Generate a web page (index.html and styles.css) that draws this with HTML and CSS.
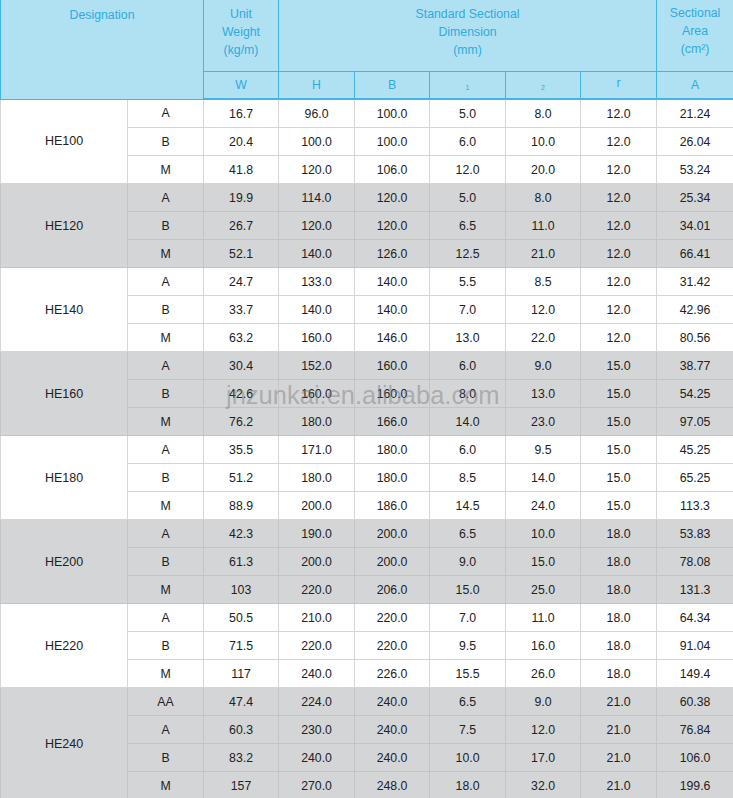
FILE: index.html
```html
<!DOCTYPE html>
<html>
<head>
<meta charset="utf-8">
<link rel="stylesheet" href="styles.css">
</head>
<body>
<div class="wrap">
<table class="spec">
<colgroup>
<col class="c-name"><col class="c-sub"><col class="c75"><col class="c76"><col class="c75"><col class="c76"><col class="c75"><col class="c76"><col class="c-last">
</colgroup>
<thead>
<tr class="h1">
<th colspan="2" rowspan="2" class="hd-desig">Designation</th>
<th>Unit<br>Weight<br>(kg/m)</th>
<th colspan="5">Standard Sectional<br>Dimension<br>(mm)</th>
<th class="hd-area">Sectional<br>Area<br>(cm²)</th>
</tr>
<tr class="h2">
<th>W</th><th>H</th><th>B</th><th><span class="tiny">1</span></th><th><span class="tiny">2</span></th><th><span class="rr">r</span></th><th>A</th>
</tr>
</thead>
<tbody class="w">
<tr><td rowspan="3" class="nm">HE100</td><td>A</td><td>16.7</td><td>96.0</td><td>100.0</td><td>5.0</td><td>8.0</td><td>12.0</td><td>21.24</td></tr>
<tr><td>B</td><td>20.4</td><td>100.0</td><td>100.0</td><td>6.0</td><td>10.0</td><td>12.0</td><td>26.04</td></tr>
<tr><td>M</td><td>41.8</td><td>120.0</td><td>106.0</td><td>12.0</td><td>20.0</td><td>12.0</td><td>53.24</td></tr>
</tbody>
<tbody class="g">
<tr><td rowspan="3" class="nm">HE120</td><td>A</td><td>19.9</td><td>114.0</td><td>120.0</td><td>5.0</td><td>8.0</td><td>12.0</td><td>25.34</td></tr>
<tr><td>B</td><td>26.7</td><td>120.0</td><td>120.0</td><td>6.5</td><td>11.0</td><td>12.0</td><td>34.01</td></tr>
<tr><td>M</td><td>52.1</td><td>140.0</td><td>126.0</td><td>12.5</td><td>21.0</td><td>12.0</td><td>66.41</td></tr>
</tbody>
<tbody class="w">
<tr><td rowspan="3" class="nm">HE140</td><td>A</td><td>24.7</td><td>133.0</td><td>140.0</td><td>5.5</td><td>8.5</td><td>12.0</td><td>31.42</td></tr>
<tr><td>B</td><td>33.7</td><td>140.0</td><td>140.0</td><td>7.0</td><td>12.0</td><td>12.0</td><td>42.96</td></tr>
<tr><td>M</td><td>63.2</td><td>160.0</td><td>146.0</td><td>13.0</td><td>22.0</td><td>12.0</td><td>80.56</td></tr>
</tbody>
<tbody class="g">
<tr><td rowspan="3" class="nm">HE160</td><td>A</td><td>30.4</td><td>152.0</td><td>160.0</td><td>6.0</td><td>9.0</td><td>15.0</td><td>38.77</td></tr>
<tr><td>B</td><td>42.6</td><td>160.0</td><td>160.0</td><td>8.0</td><td>13.0</td><td>15.0</td><td>54.25</td></tr>
<tr><td>M</td><td>76.2</td><td>180.0</td><td>166.0</td><td>14.0</td><td>23.0</td><td>15.0</td><td>97.05</td></tr>
</tbody>
<tbody class="w">
<tr><td rowspan="3" class="nm">HE180</td><td>A</td><td>35.5</td><td>171.0</td><td>180.0</td><td>6.0</td><td>9.5</td><td>15.0</td><td>45.25</td></tr>
<tr><td>B</td><td>51.2</td><td>180.0</td><td>180.0</td><td>8.5</td><td>14.0</td><td>15.0</td><td>65.25</td></tr>
<tr><td>M</td><td>88.9</td><td>200.0</td><td>186.0</td><td>14.5</td><td>24.0</td><td>15.0</td><td>113.3</td></tr>
</tbody>
<tbody class="g">
<tr><td rowspan="3" class="nm">HE200</td><td>A</td><td>42.3</td><td>190.0</td><td>200.0</td><td>6.5</td><td>10.0</td><td>18.0</td><td>53.83</td></tr>
<tr><td>B</td><td>61.3</td><td>200.0</td><td>200.0</td><td>9.0</td><td>15.0</td><td>18.0</td><td>78.08</td></tr>
<tr><td>M</td><td>103</td><td>220.0</td><td>206.0</td><td>15.0</td><td>25.0</td><td>18.0</td><td>131.3</td></tr>
</tbody>
<tbody class="w">
<tr><td rowspan="3" class="nm">HE220</td><td>A</td><td>50.5</td><td>210.0</td><td>220.0</td><td>7.0</td><td>11.0</td><td>18.0</td><td>64.34</td></tr>
<tr><td>B</td><td>71.5</td><td>220.0</td><td>220.0</td><td>9.5</td><td>16.0</td><td>18.0</td><td>91.04</td></tr>
<tr><td>M</td><td>117</td><td>240.0</td><td>226.0</td><td>15.5</td><td>26.0</td><td>18.0</td><td>149.4</td></tr>
</tbody>
<tbody class="g">
<tr><td rowspan="4" class="nm">HE240</td><td>AA</td><td>47.4</td><td>224.0</td><td>240.0</td><td>6.5</td><td>9.0</td><td>21.0</td><td>60.38</td></tr>
<tr><td>A</td><td>60.3</td><td>230.0</td><td>240.0</td><td>7.5</td><td>12.0</td><td>21.0</td><td>76.84</td></tr>
<tr><td>B</td><td>83.2</td><td>240.0</td><td>240.0</td><td>10.0</td><td>17.0</td><td>21.0</td><td>106.0</td></tr>
<tr><td>M</td><td>157</td><td>270.0</td><td>248.0</td><td>18.0</td><td>32.0</td><td>21.0</td><td>199.6</td></tr>
</tbody>
</table>
<div class="watermark">jnzunkai.en.alibaba.com</div>
</div>
</body>
</html>
```
FILE: styles.css
```css
html, body {
  margin: 0;
  padding: 0;
  background: #ffffff;
}
.wrap {
  position: relative;
  width: 733px;
}
.spec {
  width: 733px;
  table-layout: fixed;
  border-collapse: collapse;
  font-family: "Liberation Sans", Arial, sans-serif;
  font-size: 12.3px;
  color: #222222;
}
.c-name { width: 127px; }
.c-sub { width: 76px; }
.c75 { width: 75px; }
.c76 { width: 76px; }
.c-last { width: 77px; }

.spec th {
  background: #b0e1f2;
  color: #2eaae0;
  font-weight: normal;
  border: 1px solid #45b6e4;
  text-align: center;
  line-height: 18px;
  padding: 0;
}
.spec thead tr:first-child th { border-top: none; }
.h1 { height: 71px; }
.h1 th {
  vertical-align: top;
  padding-top: 5px;
}
.spec th.hd-desig { padding-top: 6px; }
.spec th.hd-area { padding-top: 4px; }
.h2 { height: 28px; }
.h2 th {
  vertical-align: middle;
  border-bottom: 2px solid #45b6e4;
  padding-top: 1px;
}
.tiny {
  font-size: 7px;
  position: relative;
  top: 2px;
}
.rr {
  position: relative;
  top: -2px;
}

.spec td {
  height: 27px;
  padding: 0;
  text-align: center;
  vertical-align: middle;
  border: 1px solid #d6d6d6;
}
.w td { background: #ffffff; }
.g td {
  background: #d4d5d7;
  border-color: #c3c4c6;
}
.spec td.nm {
  font-size: 12.5px;
}
.watermark {
  position: absolute;
  left: 226px;
  top: 381px;
  font-family: "Liberation Sans", Arial, sans-serif;
  font-size: 25.5px;
  color: rgba(120, 120, 120, 0.45);
  white-space: nowrap;
  pointer-events: none;
}
```
